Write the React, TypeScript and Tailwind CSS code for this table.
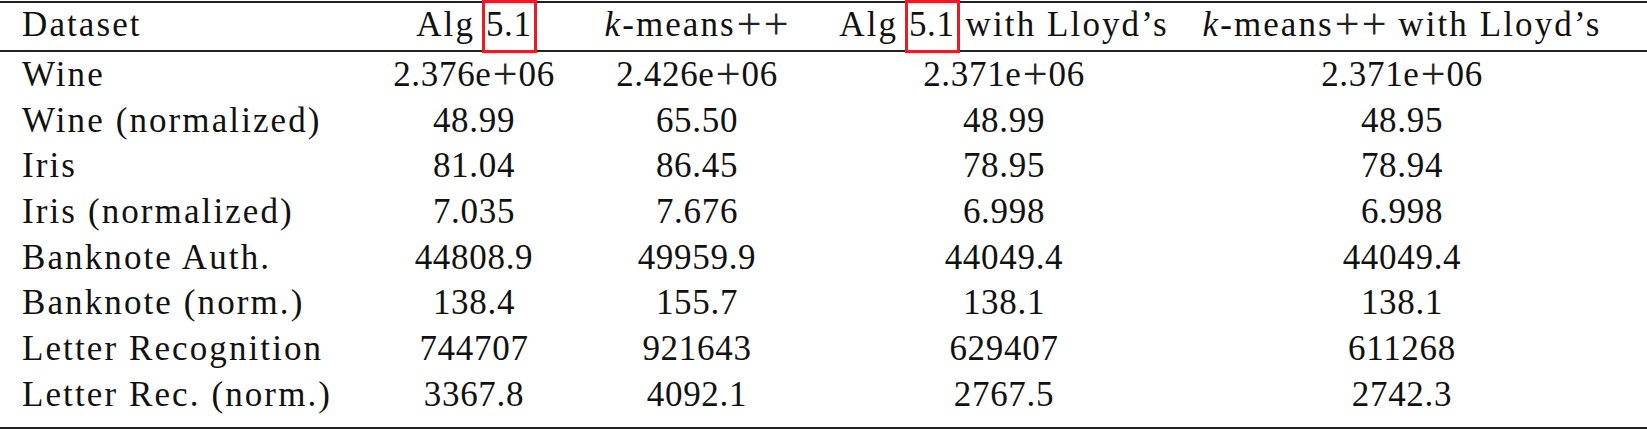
import React from "react";

const rows: [string, string, string, string, string][] = [
  ["Wine", "2.376e+06", "2.426e+06", "2.371e+06", "2.371e+06"],
  ["Wine (normalized)", "48.99", "65.50", "48.99", "48.95"],
  ["Iris", "81.04", "86.45", "78.95", "78.94"],
  ["Iris (normalized)", "7.035", "7.676", "6.998", "6.998"],
  ["Banknote Auth.", "44808.9", "49959.9", "44049.4", "44049.4"],
  ["Banknote (norm.)", "138.4", "155.7", "138.1", "138.1"],
  ["Letter Recognition", "744707", "921643", "629407", "611268"],
  ["Letter Rec. (norm.)", "3367.8", "4092.1", "2767.5", "2742.3"],
];

const gridCols = "grid grid-cols-[380px_188px_258px_356px_440px]";

function Plus() {
  return (
    <span className="inline-block text-[44px] leading-[0] align-[-3px] tracking-normal mx-[1px] text-[#222]">
      +
    </span>
  );
}

function Num({ v }: { v: string }) {
  const parts = v.split("+");
  if (parts.length === 1) return <>{v}</>;
  return (
    <>
      {parts[0]}
      <Plus />
      {parts[1]}
    </>
  );
}

function Ref() {
  return (
    <span className="relative inline-block tracking-[0.02em]">
      5.1
      <span className="absolute left-[-4px] right-[-5px] top-[-3px] bottom-[-7px] border-[3px] border-[#e41e26]" />
    </span>
  );
}

function KMeans() {
  return (
    <>
      <i>k</i>-means
      <Plus />
      <Plus />
    </>
  );
}

export default function App() {
  return (
    <div
      className="w-[1647px] bg-white text-[#111] text-[35px] pt-[1px]"
      style={{ fontFamily: '"Liberation Serif", "Times New Roman", serif' }}
    >
      <div className="h-[2px] bg-[#222]" />
      <div className={`${gridCols} h-[43px] leading-[43px] whitespace-nowrap tracking-[0.06em]`}>
        <div className="pl-[22px]">Dataset</div>
        <div className="text-center">
          Alg <Ref />
        </div>
        <div className="text-center">
          <KMeans />
        </div>
        <div className="text-center">
          Alg <Ref /> with Lloyd’s
        </div>
        <div className="text-center">
          <KMeans /> with Lloyd’s
        </div>
      </div>
      <div className="mt-[4px] h-[2px] bg-[#222]" />
      <div className="leading-[45.7px] whitespace-nowrap">
        {rows.map((r) => (
          <div key={r[0]} className={`${gridCols} h-[45.7px]`}>
            <div className="pl-[22px] tracking-[0.06em]">{r[0]}</div>
            {r.slice(1).map((v, i) => (
              <div key={i} className="text-center tracking-[0.02em]">
                <Num v={v} />
              </div>
            ))}
          </div>
        ))}
      </div>
      <div className="mt-[9px] h-[2px] bg-[#222]" />
    </div>
  );
}
